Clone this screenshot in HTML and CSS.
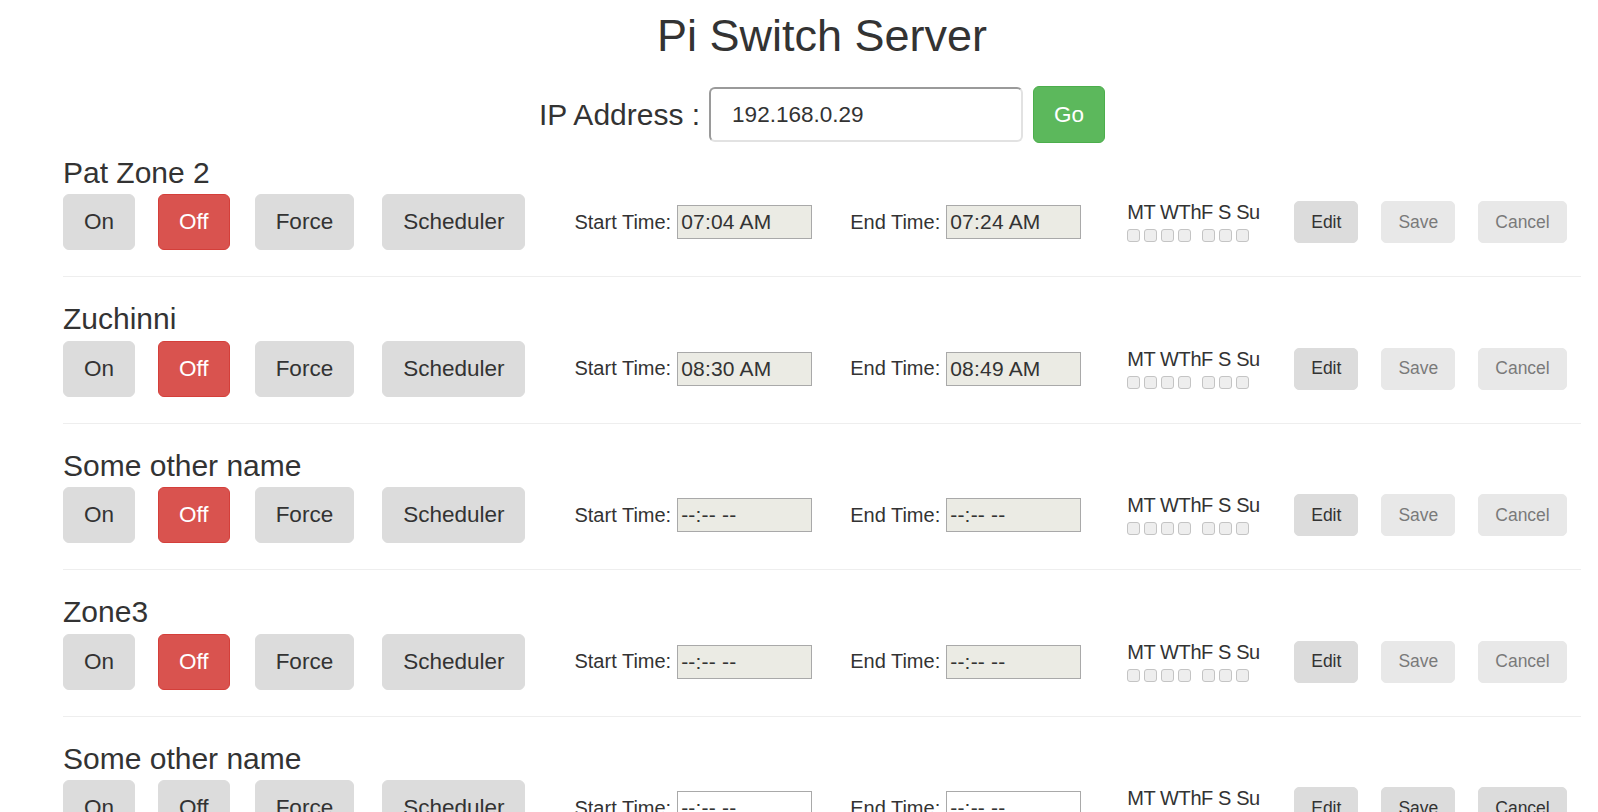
FILE: index.html
```html
<!DOCTYPE html>
<html>
<head>
<meta charset="utf-8">
<title>Pi Switch Server</title>
<link rel="stylesheet" href="styles.css">
</head>
<body>
<div class="container">
  <h1 class="title">Pi Switch Server</h1>
  <div class="ip-row">
    <label class="ip-label">IP Address :</label>
    <input class="ip-input" type="text" value="192.168.0.29">
    <button class="btn-go">Go</button>
  </div>

  <div class="zones">
    <div class="zone">
      <h3 class="zone-name">Pat Zone 2</h3>
      <div class="controls">
        <button class="btn btn-on">On</button>
        <button class="btn btn-off active-off">Off</button>
        <button class="btn btn-force">Force</button>
        <button class="btn btn-sched">Scheduler</button>
        <span class="time-label">Start Time:</span>
        <input class="time-input start" type="text" value="07:04 AM" readonly>
        <span class="time-label">End Time:</span>
        <input class="time-input end" type="text" value="07:24 AM" readonly>
        <div class="days">
          <div class="days-label">MT WThF S Su</div>
          <div class="checks"><span class="check"></span><span class="check"></span><span class="check"></span><span class="check wide"></span><span class="check"></span><span class="check"></span><span class="check"></span></div>
        </div>
        <button class="btn btn-sm btn-edit">Edit</button>
        <button class="btn btn-sm btn-save disabled">Save</button>
        <button class="btn btn-sm btn-cancel disabled">Cancel</button>
      </div>
      <hr class="sep">
    </div>

    <div class="zone">
      <h3 class="zone-name">Zuchinni</h3>
      <div class="controls">
        <button class="btn btn-on">On</button>
        <button class="btn btn-off active-off">Off</button>
        <button class="btn btn-force">Force</button>
        <button class="btn btn-sched">Scheduler</button>
        <span class="time-label">Start Time:</span>
        <input class="time-input start" type="text" value="08:30 AM" readonly>
        <span class="time-label">End Time:</span>
        <input class="time-input end" type="text" value="08:49 AM" readonly>
        <div class="days">
          <div class="days-label">MT WThF S Su</div>
          <div class="checks"><span class="check"></span><span class="check"></span><span class="check"></span><span class="check wide"></span><span class="check"></span><span class="check"></span><span class="check"></span></div>
        </div>
        <button class="btn btn-sm btn-edit">Edit</button>
        <button class="btn btn-sm btn-save disabled">Save</button>
        <button class="btn btn-sm btn-cancel disabled">Cancel</button>
      </div>
      <hr class="sep">
    </div>

    <div class="zone">
      <h3 class="zone-name">Some other name</h3>
      <div class="controls">
        <button class="btn btn-on">On</button>
        <button class="btn btn-off active-off">Off</button>
        <button class="btn btn-force">Force</button>
        <button class="btn btn-sched">Scheduler</button>
        <span class="time-label">Start Time:</span>
        <input class="time-input start" type="text" value="--:-- --" readonly>
        <span class="time-label">End Time:</span>
        <input class="time-input end" type="text" value="--:-- --" readonly>
        <div class="days">
          <div class="days-label">MT WThF S Su</div>
          <div class="checks"><span class="check"></span><span class="check"></span><span class="check"></span><span class="check wide"></span><span class="check"></span><span class="check"></span><span class="check"></span></div>
        </div>
        <button class="btn btn-sm btn-edit">Edit</button>
        <button class="btn btn-sm btn-save disabled">Save</button>
        <button class="btn btn-sm btn-cancel disabled">Cancel</button>
      </div>
      <hr class="sep">
    </div>

    <div class="zone">
      <h3 class="zone-name">Zone3</h3>
      <div class="controls">
        <button class="btn btn-on">On</button>
        <button class="btn btn-off active-off">Off</button>
        <button class="btn btn-force">Force</button>
        <button class="btn btn-sched">Scheduler</button>
        <span class="time-label">Start Time:</span>
        <input class="time-input start" type="text" value="--:-- --" readonly>
        <span class="time-label">End Time:</span>
        <input class="time-input end" type="text" value="--:-- --" readonly>
        <div class="days">
          <div class="days-label">MT WThF S Su</div>
          <div class="checks"><span class="check"></span><span class="check"></span><span class="check"></span><span class="check wide"></span><span class="check"></span><span class="check"></span><span class="check"></span></div>
        </div>
        <button class="btn btn-sm btn-edit">Edit</button>
        <button class="btn btn-sm btn-save disabled">Save</button>
        <button class="btn btn-sm btn-cancel disabled">Cancel</button>
      </div>
      <hr class="sep">
    </div>

    <div class="zone">
      <h3 class="zone-name">Some other name</h3>
      <div class="controls">
        <button class="btn btn-on">On</button>
        <button class="btn btn-off">Off</button>
        <button class="btn btn-force">Force</button>
        <button class="btn btn-sched">Scheduler</button>
        <span class="time-label">Start Time:</span>
        <input class="time-input start editable" type="text" value="--:-- --">
        <span class="time-label">End Time:</span>
        <input class="time-input end editable" type="text" value="--:-- --">
        <div class="days">
          <div class="days-label">MT WThF S Su</div>
          <div class="checks"><span class="check"></span><span class="check"></span><span class="check"></span><span class="check wide"></span><span class="check"></span><span class="check"></span><span class="check"></span></div>
        </div>
        <button class="btn btn-sm btn-edit">Edit</button>
        <button class="btn btn-sm btn-save">Save</button>
        <button class="btn btn-sm btn-cancel">Cancel</button>
      </div>
      <hr class="sep">
    </div>
  </div>
</div>
</body>
</html>
```

FILE: styles.css
```css
html, body {
  margin: 0;
  padding: 0;
  background: #fff;
}

body {
  font-family: "Liberation Sans", Arial, sans-serif;
  color: #333;
}

.container {
  margin-left: 63px;
  width: 1518px;
}

.title {
  margin: 11px 0 0;
  font-size: 45px;
  font-weight: normal;
  line-height: 49.5px;
  text-align: center;
  color: #333;
}

.ip-row {
  display: flex;
  justify-content: center;
  align-items: center;
  margin-top: 25.5px;
  height: 57px;
}

.ip-label {
  font-size: 30px;
  margin-right: 9px;
}

.ip-input {
  width: 314px;
  height: 55px;
  box-sizing: border-box;
  border: 2px solid;
  border-color: #9a9a9a #e2e2e2 #e2e2e2 #9a9a9a;
  border-radius: 6px;
  font-family: "Liberation Sans", Arial, sans-serif;
  font-size: 22.5px;
  color: #333;
  padding: 0 21px;
  margin-right: 10px;
  outline: none;
}

.btn-go {
  height: 57px;
  width: 72px;
  background: #5cb85c;
  border: 1px solid #4cae4c;
  color: #fff;
  font-family: "Liberation Sans", Arial, sans-serif;
  font-size: 22.5px;
  border-radius: 6px;
  padding: 0;
}

.zones {
  margin-top: 9.5px;
}

.zone-name {
  margin: 0 0 5.5px;
  padding-top: 3px;
  font-size: 30px;
  font-weight: normal;
  line-height: 33px;
  color: #333;
}

.controls {
  display: flex;
  align-items: center;
  height: 56px;
}

.sep {
  border: 0;
  border-top: 1px solid #eee;
  margin: 26px 0 22px;
  height: 0;
}

.btn {
  font-family: "Liberation Sans", Arial, sans-serif;
  font-size: 22.5px;
  height: 56px;
  padding: 0 20px;
  border: 1px solid #dcdcdc;
  background: #dcdcdc;
  color: #333;
  border-radius: 6px;
  flex: none;
}

.btn-on { margin-right: 23px; }
.btn-off { margin-right: 25px; }
.btn-force { margin-right: 28px; }
.btn-sched { margin-right: 49px; }

.active-off {
  background: #d9534f;
  border-color: #d43f3a;
  color: #fff;
}

.time-label {
  font-size: 20px;
  margin-right: 6px;
  white-space: nowrap;
}

.time-input {
  width: 135px;
  height: 34px;
  box-sizing: border-box;
  border: 1px solid #a9a9a9;
  background: #ebebe4;
  font-family: "Liberation Sans", Arial, sans-serif;
  font-size: 21px;
  letter-spacing: 0.2px;
  color: #333;
  padding: 0 3px;
  outline: none;
  flex: none;
}

.time-input.start { margin-right: 38px; }
.time-input.end { margin-right: 46px; }
.time-input.editable { background: #fff; }

.days {
  display: flex;
  flex-direction: column;
  width: 132px;
  margin-right: 35px;
  flex: none;
}

.days-label {
  font-size: 20px;
  line-height: 20px;
  letter-spacing: -0.4px;
  white-space: nowrap;
  color: #333;
}

.checks {
  display: flex;
  margin-top: 7px;
  gap: 4px;
}

.check {
  width: 13px;
  height: 13px;
  box-sizing: border-box;
  border: 1px solid #c4c4c4;
  border-radius: 3px;
  background: #eeeeee;
  flex: none;
}

.check.wide { margin-right: 7px; }

.btn-sm {
  font-size: 17.5px;
  height: 42px;
  padding: 0 16px;
  border-radius: 5px;
}

.btn-edit { margin-right: 23px; }
.btn-save { margin-right: 23px; }

.disabled {
  opacity: 0.65;
}
```
